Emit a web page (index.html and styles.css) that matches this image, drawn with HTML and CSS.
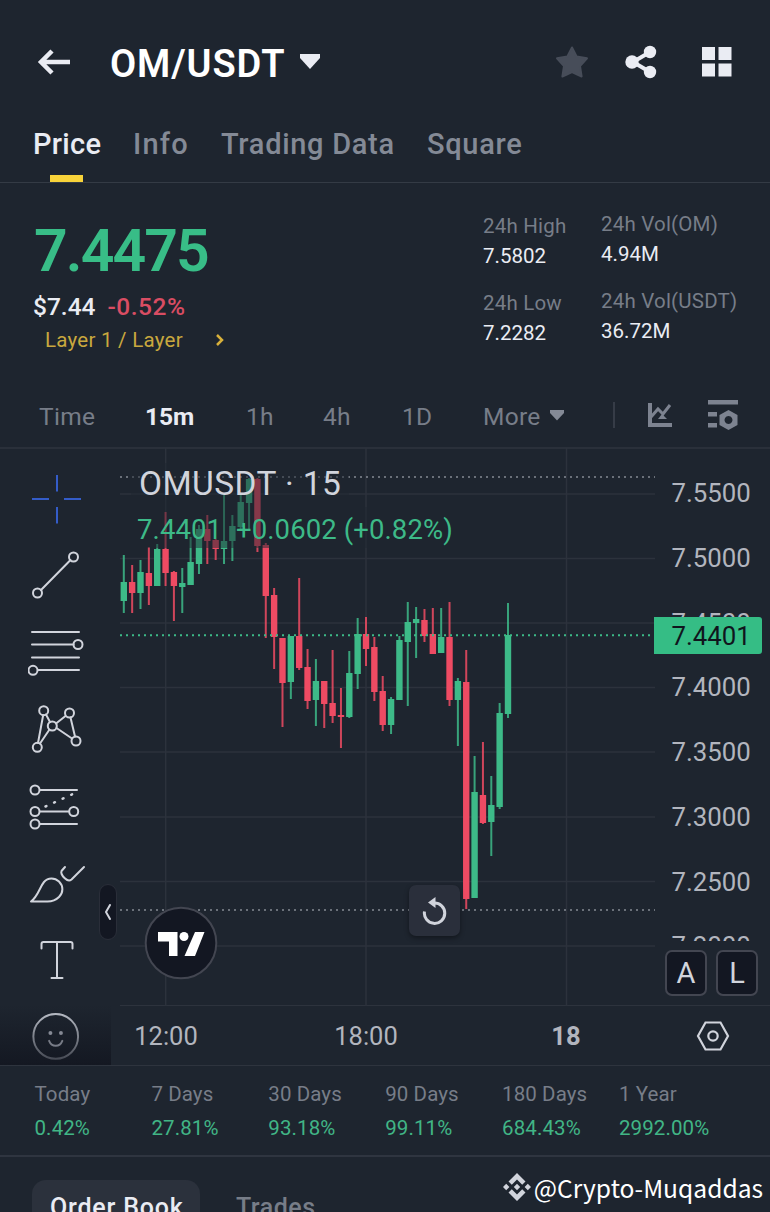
FILE: index.html
```
<!DOCTYPE html>
<html lang="en">

<head>
    <meta charset="UTF-8">
    <meta name="viewport" content="width=device-width, initial-scale=1.0">
    <title>OM/USDT</title>
    <link rel="stylesheet" href="styles.css">
</head>

<body>
    <header class="topbar">
        <svg class="back" width="34" height="26" viewBox="0 0 34 26">
            <path d="M33 13H4M15 2L4 13l11 11" />
        </svg>
        <h1>OM/USDT</h1>
        <svg class="caret" width="20" height="16" viewBox="0 0 20 16">
            <path d="M0 0h20v4L10 15 0 4z" />
        </svg>
        <div class="actions">
            <svg class="star" width="34" height="34" viewBox="0 0 34 34">
                <path d="M17 2.500l4.600 9L32 13.300l-7 7.700 1.600 10.500L17 27l-9.600 4.500L9 21 2 13.300l10.400-1.800z" />
            </svg>
            <svg class="share" width="34" height="34" viewBox="0 0 34 34">
                <path d="M26 7L9 17l17 10" />
                <circle cx="26" cy="7" r="6.200" />
                <circle cx="8" cy="17" r="6.700" />
                <circle cx="26" cy="27" r="6.200" />
            </svg>
            <svg class="apps" width="30" height="30" viewBox="0 0 30 30">
                <path d="M0 0h13v13H0zM16.500 0h13v13h-13zM0 16.500h13v13H0zM16.500 16.500h13v13h-13z" />
            </svg>
        </div>
    </header>

    <nav class="tabs">
        <a class="tab active">Price</a>
        <a class="tab info">Info</a>
        <a class="tab trading">Trading Data</a>
        <a class="tab square">Square</a>
    </nav>

    <section class="ticker">
        <div class="ticker-main">
            <div class="last-price">7.4475</div>
            <div class="change"><span class="usd">$7.44</span><span class="down">-0.52%</span></div>
            <div class="category">
                <span>Layer 1 / Layer</span>
                <svg width="10" height="14" viewBox="0 0 10 14">
                    <path d="M2 2l5 5-5 5" />
                </svg>
            </div>
        </div>
        <div class="stats">
            <dl>
                <dt>24h High</dt>
                <dd>7.5802</dd>
                <dt>24h Low</dt>
                <dd>7.2282</dd>
            </dl>
            <dl class="volume">
                <dt>24h Vol(OM)</dt>
                <dd>4.94M</dd>
                <dt>24h Vol(USDT)</dt>
                <dd>36.72M</dd>
            </dl>
        </div>
    </section>

    <nav class="intervals">
        <span>Time</span>
        <span class="selected">15m</span>
        <span>1h</span>
        <span>4h</span>
        <span>1D</span>
        <span class="more">More
            <svg width="14" height="11" viewBox="0 0 14 11">
                <path d="M0 0h14v3L7 10.500 0 3z" />
            </svg>
        </span>
        <i class="divider"></i>
        <svg class="indicator" width="24" height="24" viewBox="0 0 24 24">
            <path d="M2 0v22h22" class="thick" />
            <path d="M3 14l7-8 5 5 7-9" class="line" />
            <path d="M14 11l5 5h-9z" />
        </svg>
        <svg class="settings" width="30" height="30" viewBox="0 0 30 30">
            <path d="M0 0h30v4.500H0zM0 12h9v4.500H0zM0 23h9v4.500H0z" />
            <path fill-rule="evenodd" d="M20.500 10l9 5v10l-9 5-9-5V15zM20.500 16a4 4 0 1 0 .01 0z" />
        </svg>
    </nav>

    <main class="chart">
        <aside class="tools">
            <svg class="crosshair" width="58" height="77" viewBox="0 0 58 77">
                <path d="M4 39h17M36 39h17M29 15v16.500M29 47v16.500" />
            </svg>
            <svg width="58" height="77" viewBox="0 0 58 77">
                <path d="M13 53l29.500-30" />
                <circle cx="9.500" cy="56" r="4.500" />
                <circle cx="45.500" cy="20" r="4.500" />
            </svg>
            <svg width="58" height="77" viewBox="0 0 58 77">
                <path d="M4 18h47M4 30.500h41.500M4 43.500h47M10 56h41" />
                <circle cx="50" cy="30.500" r="4.500" />
                <circle cx="5" cy="56.300" r="4.500" />
            </svg>
            <svg width="58" height="77" viewBox="0 0 58 77">
                <path d="M15.200 24L10 52M18 23.500l4 7.500M21.500 38.500L12 52.500M28 32.500l9.500-7.500M42.500 26.500L47 45.500M28.500 37L44 47.500" />
                <circle cx="15.700" cy="19.700" r="4.500" />
                <circle cx="41.500" cy="22" r="4.500" />
                <circle cx="24.300" cy="35" r="4.500" />
                <circle cx="9.300" cy="56.300" r="4.500" />
                <circle cx="48" cy="50" r="4.500" />
            </svg>
            <svg width="58" height="77" viewBox="0 0 58 77">
                <path d="M12 22h37M12 43.500h29M12 56h37" />
                <path class="dots" d="M17.500 38.500L46 25.500" />
                <circle cx="7" cy="22" r="4.500" />
                <circle cx="7" cy="43.500" r="4.500" />
                <circle cx="45.700" cy="43.500" r="4.500" />
                <circle cx="7" cy="56" r="4.500" />
            </svg>
            <svg width="58" height="77" viewBox="0 0 58 77">
                <path d="M3 56.500c7-5 8.500-14 13-19.500 4-5 11-4.500 15-.5 4.500 4.500 4.500 11 0 15.500-3 3-7 4.500-11.500 4.500zM56 22L43.500 34.500c-2.500 2-5 .5-7-1.500s-4-4.500-3-7l3.500-4" />
            </svg>
            <svg width="58" height="77" viewBox="0 0 58 77">
                <path d="M13.500 26.500V22q0-2 2-2h27q2 0 2 2v4.500M29 20v36M23.500 56h11" />
            </svg>
            <svg class="smile" width="58" height="66" viewBox="0 0 58 66">
                <linearGradient id="fade" x1="0" y1="0" x2="0" y2="1">
                    <stop offset="0" stop-color="#b4b8c1" />
                    <stop offset="1" stop-color="#484c56" />
                </linearGradient>
                <circle class="face" cx="27.700" cy="38" r="22.700" />
                <circle class="eye" cx="22.300" cy="34.500" r="2" />
                <circle class="eye" cx="33" cy="34.500" r="2" />
                <path d="M21 42.500q2 5 6.700 5t6.700-5" />
            </svg>
            <div class="collapse">
                <svg width="8" height="16" viewBox="0 0 8 16">
                    <path d="M6 1L2 8l4 7" />
                </svg>
            </div>
        </aside>

        <div class="plot">
            <svg id="candles" width="535" height="558" viewBox="120 448 535 558"></svg>
            <div class="legend">
                <div class="symbol">OMUSDT · 15</div>
                <div class="values">7.4401&nbsp; +0.0602 (+0.82%)</div>
            </div>
            <svg class="tv-logo" width="74" height="74" viewBox="0 0 74 74">
                <circle cx="37" cy="37" r="35.300" />
                <path d="M14 26h19.500v24H25V35.500H14zM51 26h9.500L51 50H40.500z" />
                <circle class="dot" cx="40" cy="30.500" r="4.500" />
            </svg>
            <div class="reset">
                <svg width="28" height="28" viewBox="0 0 28 28">
                    <path class="arc" d="M3.500 14.500A10.200 10.200 0 1 0 13 6" />
                    <path d="M14.500 0v11L7 5.500z" />
                </svg>
            </div>
        </div>

        <div class="price-axis">
            <div class="prices">
                <span>7.5500</span>
                <span>7.5000</span>
                <span>7.4500</span>
                <span>7.4000</span>
                <span>7.3500</span>
                <span>7.3000</span>
                <span>7.2500</span>
                <span>7.2000</span>
            </div>
            <div class="current">7.4401</div>
            <div class="scale">
                <button>A</button>
                <button>L</button>
            </div>
        </div>

        <div class="time-axis">
            <span>12:00</span>
            <span>18:00</span>
            <span class="day">18</span>
        </div>
        <div class="axis-settings">
            <svg width="34" height="30" viewBox="0 0 34 30">
                <path d="M9.500 1.500h15L32 15l-7.500 13.500h-15L2 15z" />
                <circle cx="17" cy="15" r="4.700" />
            </svg>
        </div>
    </main>

    <section class="performance">
        <div>Today<b>0.42%</b></div>
        <div>7 Days<b>27.81%</b></div>
        <div>30 Days<b>93.18%</b></div>
        <div>90 Days<b>99.11%</b></div>
        <div>180 Days<b>684.43%</b></div>
        <div>1 Year<b>2992.00%</b></div>
    </section>

    <footer class="book">
        <span class="book-tab current-tab">Order Book</span>
        <span class="book-tab">Trades</span>
        <div class="author">
            <svg width="28" height="28" viewBox="0 0 28 28">
                <path d="M14 0l8.500 8.500-3.300 3.300L14 6.600l-5.200 5.200-3.300-3.300zM14 28l8.500-8.500-3.300-3.300-5.200 5.200-5.200-5.200-3.300 3.300zM3.200 10.800L6.400 14l-3.200 3.200L0 14zM24.800 10.800L28 14l-3.200 3.200-3.200-3.200zM14 10.800l3.200 3.200-3.200 3.200-3.200-3.200z" />
            </svg>
            <span>@Crypto-Muqaddas</span>
        </div>
    </footer>

    <script>
        // direction, high, low, body top, body bottom
        var candles = [
            ['up', 555, 613, 582, 601], ['down', 565, 613, 582, 593], ['up', 560, 609, 572, 593],
            ['down', 547, 605, 573, 586], ['up', 544, 586, 549, 586], ['down', 512, 586, 549, 573],
            ['down', 571, 621, 572, 586], ['up', 568, 613, 583, 587], ['up', 537, 585, 562, 585],
            ['up', 525, 574, 529, 564], ['down', 515, 564, 529, 541], ['down', 539, 560, 540, 549],
            ['up', 495, 564, 541, 549], ['up', 515, 561, 526, 541], ['up', 493, 531, 502, 527],
            ['up', 478, 531, 479, 503], ['down', 478, 552, 479, 546], ['down', 543, 638, 545, 596],
            ['down', 588, 669, 595, 637], ['down', 638, 727, 638, 683], ['up', 636, 699, 636, 682],
            ['down', 578, 670, 636, 668], ['down', 649, 709, 667, 701], ['up', 659, 726, 681, 700],
            ['down', 681, 728, 681, 704], ['down', 650, 723, 703, 716], ['down', 688, 748, 715, 717],
            ['up', 651, 718, 673, 717], ['up', 618, 689, 634, 674], ['down', 617, 666, 634, 649],
            ['down', 637, 701, 647, 692], ['down', 676, 731, 691, 725], ['up', 697, 734, 699, 725],
            ['up', 636, 700, 640, 700], ['up', 602, 706, 622, 642], ['up', 607, 658, 619, 623],
            ['down', 609, 642, 620, 636], ['down', 608, 654, 634, 654], ['up', 608, 653, 637, 653],
            ['down', 602, 706, 637, 700], ['up', 678, 746, 681, 700], ['down', 650, 909, 682, 899],
            ['up', 756, 898, 792, 898], ['down', 742, 824, 795, 823], ['up', 776, 856, 805, 822],
            ['up', 703, 809, 713, 807], ['up', 603, 718, 635, 714]
        ];

        var out = '';

        // grid
        [494, 558.5, 623, 687.5, 752, 817, 881.5, 946].forEach(function (y) {
            out += '<line class="grid" x1="120" x2="655" y1="' + y + '" y2="' + y + '"/>';
        });
        [165.7, 366, 566.5].forEach(function (x) {
            out += '<line class="grid" x1="' + x + '" x2="' + x + '" y1="448" y2="1006"/>';
        });

        candles.forEach(function (c, i) {
            var x = 123.8 + i * 8.352;
            out += '<rect class="' + c[0] + ' wick" x="' + (x - 1) + '" y="' + c[1] + '" width="2" height="' + (c[2] - c[1]) + '"/>';
            out += '<rect class="' + c[0] + '" x="' + (x - 3.2) + '" y="' + c[3] + '" width="6.400" height="' + (c[4] - c[3]) + '"/>';
        });

        // high, low and last price lines
        out += '<line class="limit" x1="120" x2="655" y1="477" y2="477"/>';
        out += '<line class="limit" x1="120" x2="655" y1="910" y2="910"/>';
        out += '<line class="last" x1="120" x2="655" y1="635.300" y2="635.300"/>';

        document.getElementById('candles').innerHTML = out;
    </script>
</body>

</html>
```
FILE: styles.css
```
* {
    box-sizing: border-box;
}

body {
    font-family: Roboto, 'Liberation Sans', sans-serif;
    margin: 0;
    width: 770px;
    height: 1212px;
    overflow: hidden;
    background-color: #1e252f;
    color: #eaecf3;
}

svg {
    display: block;
    flex: none;
}

/* header */
.topbar {
    display: flex;
    align-items: center;
    height: 124px;
    padding: 0 38px 0 37px;
}

.back path {
    fill: none;
    stroke: #eaecf3;
    stroke-width: 4.5;
}

.topbar h1 {
    margin: 3px 16px 0 39px;
    width: 174px;
    font-size: 38px;
    font-weight: 600;
    line-height: 44px;
    letter-spacing: 0.9px;
    color: #fff;
    white-space: nowrap;
}

.caret,
.apps,
.share circle {
    fill: #eaecf3;
}

.actions {
    display: flex;
    align-items: center;
    margin-left: auto;
}

.star {
    fill: #474d59;
    stroke: #474d59;
    stroke-width: 2;
    stroke-linejoin: round;
}

.share {
    margin: 0 44px 0 35px;
}

.share path {
    fill: none;
    stroke: #eaecf3;
    stroke-width: 4;
}

/* tabs */
.tabs {
    display: flex;
    gap: 33px;
    height: 59px;
    padding-left: 33px;
    border-bottom: 1px solid #343b45;
    font-size: 29px;
    font-weight: 500;
    line-height: 40px;
    letter-spacing: 0.7px;
    color: #848a96;
}

.tab {
    position: relative;
    white-space: nowrap;
}

.active {
    width: 67px;
    letter-spacing: 0.3px;
    color: #eaecf3;
}

.active::after {
    content: "";
    position: absolute;
    left: 17px;
    bottom: 0;
    width: 33px;
    height: 7px;
    background-color: #f8d33a;
}

.info {
    width: 55px;
    letter-spacing: 1.2px;
}

.trading {
    width: 173px;
}

/* ticker */
.ticker {
    display: flex;
    height: 200px;
}

.ticker-main {
    width: 483px;
    padding: 34px 0 0 33px;
}

.last-price {
    margin-left: 1px;
    font-size: 59px;
    font-weight: 600;
    line-height: 68px;
    letter-spacing: -1.9px;
    color: #38bd87;
}

.change {
    display: flex;
    gap: 12px;
    margin-top: 7px;
    font-size: 24.5px;
    font-weight: 500;
    line-height: 30px;
}

.change .down {
    letter-spacing: 0.5px;
    color: #d94d63;
}

.category {
    display: flex;
    align-items: center;
    gap: 32px;
    padding-left: 12px;
    margin-top: 6px;
    font-size: 20.5px;
    line-height: 24px;
    letter-spacing: 0.25px;
    color: #c9a83e;
}

.category path {
    fill: none;
    stroke: #d9b13b;
    stroke-width: 2.5;
}

.stats {
    display: flex;
    padding-top: 31px;
    font-size: 20.500px;
}

.stats dl {
    width: 118px;
    margin: 0;
}

.stats .volume {
    margin-top: -2px;
}

dt {
    line-height: 24px;
    letter-spacing: 0.2px;
    color: #777d88;
    white-space: nowrap;
}

dd {
    margin: 6px 0 23px;
    line-height: 24px;
}

/* intervals */
.intervals {
    display: grid;
    grid-template-columns: 107px 100px 77px 79px 81px 130px 35px 60px 30px;
    height: 66px;
    padding: 17px 0 0 39px;
    border-bottom: 2px solid #2a303a;
    font-size: 24.500px;
    line-height: 34px;
    letter-spacing: 0.3px;
    color: #777d88;
}

.selected {
    margin-left: -1px;
    font-weight: 700;
    letter-spacing: 0;
    color: #eaecf3;
}

.more {
    display: flex;
    gap: 9px;
}

.more svg {
    margin-top: 10px;
    fill: #848a96;
}

.divider {
    width: 2px;
    height: 26px;
    margin-top: 2px;
    background-color: #363c47;
}

.indicator,
.settings {
    fill: #7d8390;
}

.indicator {
    margin-top: 3px;
}

.indicator .thick,
.indicator .line {
    fill: none;
    stroke: #7d8390;
    stroke-width: 4;
}

.indicator .line {
    stroke-width: 3;
}

/* chart */
.chart {
    display: grid;
    grid-template-columns: 120px 535px 115px;
    grid-template-rows: 558px 59px;
    height: 618px;
    margin-top: -1px;
    border-bottom: 1px solid #2e343e;
}

.tools {
    position: relative;
    grid-row: 1 / 3;
    padding: 12px 0 0 28px;
    background: linear-gradient(to bottom, rgba(19, 23, 34, 0), #141822) 0 100% / 111px 60px no-repeat;
}

.tools svg {
    fill: none;
    stroke: #d1d4dc;
    stroke-width: 2;
    stroke-linecap: round;
    stroke-linejoin: round;
}

.tools .crosshair {
    stroke: #345cc8;
    stroke-linecap: butt;
}

.tools .dots {
    stroke-width: 2.500;
    stroke-dasharray: 1 8.400;
}

.tools .smile {
    height: 65px;
    margin-bottom: -10px;
    stroke: #777b86;
}

.smile .face {
    stroke: url(#fade);
}

.smile .eye {
    fill: #858994;
    stroke: none;
}

.collapse {
    display: flex;
    position: absolute;
    left: 99px;
    top: 436px;
    width: 18px;
    height: 56px;
    align-items: center;
    justify-content: center;
    border: 1px solid #2a2e39;
    border-radius: 9px;
    background-color: #131722;
}

.plot {
    position: relative;
    border-bottom: 1px solid #2d333d;
}

.grid {
    stroke: #2c323c;
    stroke-width: 1.500;
}

.up {
    fill: #3dba88;
}

.down {
    fill: #ee4b63;
}

.wick {
    opacity: 0.85;
}

.limit,
.last {
    stroke: #858a94;
    stroke-width: 1.700;
    stroke-dasharray: 2 4;
}

.last {
    stroke: #3dba88;
    stroke-width: 2;
}

.legend {
    position: absolute;
    left: 11px;
    top: 15px;
}

.legend div {
    width: max-content;
    background-color: rgba(30, 37, 47, 0.5);
}

.symbol {
    height: 44px;
    padding: 0 8px;
    font-size: 33.500px;
    line-height: 42px;
    letter-spacing: 0.4px;
    color: #d1d4dc;
}

.values {
    height: 41px;
    padding: 0 6px;
    font-size: 27.500px;
    line-height: 45px;
    letter-spacing: 0.1px;
    color: #3dba88;
}

.tv-logo {
    position: absolute;
    left: 24px;
    top: 458px;
    fill: #fff;
}

.tv-logo circle {
    fill: #131722;
    stroke: #434651;
    stroke-width: 2;
}

.tv-logo .dot {
    fill: #fff;
    stroke: none;
}

.reset {
    display: flex;
    position: absolute;
    left: 289px;
    top: 437px;
    width: 51px;
    height: 51px;
    align-items: center;
    justify-content: center;
    border-radius: 7px;
    background-color: #2a2f3b;
    box-shadow: 0 2px 5px rgba(0, 0, 0, 0.4);
    fill: #d1d4dc;
}

.reset .arc {
    fill: none;
    stroke: #d1d4dc;
    stroke-width: 3;
}

.price-axis {
    position: relative;
    border-bottom: 1px solid #2d333d;
    color: #b2b5be;
}

.prices {
    height: 493px;
    padding: 13px 0 0 16.500px;
    overflow: hidden;
}

.prices span {
    display: block;
    font-size: 25.800px;
    line-height: 64.750px;
}

.current {
    position: absolute;
    left: -1px;
    top: 169px;
    width: 108px;
    height: 37px;
    padding-left: 17.500px;
    border-radius: 0 3px 3px 0;
    background-color: #35bd85;
    font-size: 25.800px;
    line-height: 38px;
    color: #10151d;
}

.scale {
    display: flex;
    gap: 9px;
    margin: 9px 0 0 10px;
}

.scale button {
    width: 42px;
    height: 46px;
    padding: 0;
    border: 2px solid #434651;
    border-radius: 7px;
    background-color: #131722;
    font-family: inherit;
    font-size: 29px;
    line-height: 40px;
    color: #d1d4dc;
}

.time-axis {
    display: grid;
    grid-template-columns: 200px 200px 200px;
    margin-left: -54px;
    font-size: 25.500px;
    line-height: 60px;
    text-align: center;
    color: #b2b5be;
}

.day {
    font-weight: 700;
}

.axis-settings {
    padding: 15px 0 0 41px;
}

.axis-settings svg {
    fill: none;
    stroke: #d1d4dc;
    stroke-width: 2.200;
}

/* performance */
.performance {
    display: grid;
    grid-template-columns: repeat(6, 116.900px);
    height: 91px;
    padding: 16px 0 0 34.500px;
    border-bottom: 2px solid #2f3540;
    font-size: 20.500px;
    line-height: 24px;
    letter-spacing: 0.1px;
    color: #777d88;
}

.performance b {
    display: block;
    margin-top: 10px;
    font-weight: 400;
    color: #41b586;
}

/* order book */
.book {
    display: flex;
    position: relative;
    height: 55px;
    padding: 23px 0 0 32px;
    overflow: hidden;
}

.book-tab {
    height: 60px;
    padding: 0 18px;
    font-size: 25px;
    font-weight: 500;
    line-height: 56px;
    letter-spacing: 0.5px;
    color: #777d88;
}

.current-tab {
    width: 168px;
    padding-right: 0;
    margin-right: 18px;
    border-radius: 14px;
    background-color: #2b313c;
    letter-spacing: 0.8px;
    color: #eaecf3;
    white-space: nowrap;
}

.author {
    display: flex;
    position: absolute;
    right: 7px;
    top: 12px;
    gap: 3px;
    align-items: center;
    font-family: 'Noto Sans CJK SC', sans-serif;
    font-size: 24.600px;
    line-height: 36px;
    color: #fff;
}

.author svg {
    margin-top: -1px;
    fill: #d1d4dc;
}
```
